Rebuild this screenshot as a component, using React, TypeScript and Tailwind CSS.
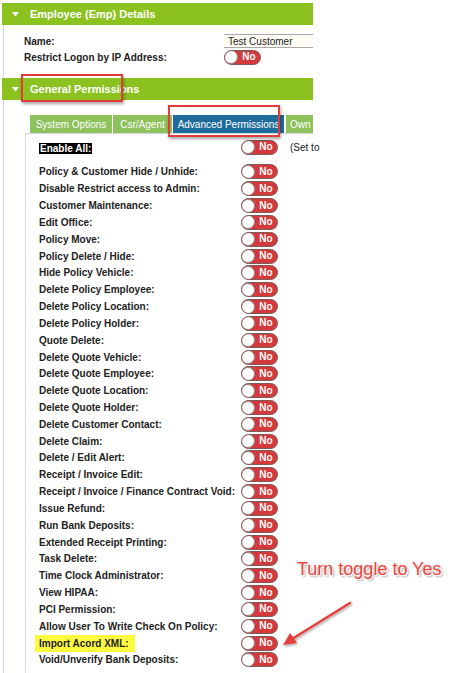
import React from 'react';

const permissions = [
  'Policy & Customer Hide / Unhide:',
  'Disable Restrict access to Admin:',
  'Customer Maintenance:',
  'Edit Office:',
  'Policy Move:',
  'Policy Delete / Hide:',
  'Hide Policy Vehicle:',
  'Delete Policy Employee:',
  'Delete Policy Location:',
  'Delete Policy Holder:',
  'Quote Delete:',
  'Delete Quote Vehicle:',
  'Delete Quote Employee:',
  'Delete Quote Location:',
  'Delete Quote Holder:',
  'Delete Customer Contact:',
  'Delete Claim:',
  'Delete / Edit Alert:',
  'Receipt / Invoice Edit:',
  'Receipt / Invoice / Finance Contract Void:',
  'Issue Refund:',
  'Run Bank Deposits:',
  'Extended Receipt Printing:',
  'Task Delete:',
  'Time Clock Administrator:',
  'View HIPAA:',
  'PCI Permission:',
  'Allow User To Write Check On Policy:',
  'Import Acord XML:',
  'Void/Unverify Bank Deposits:',
];

const Toggle = () => (
  <div className="flex items-center flex-shrink-0 w-[37px] h-[15px] rounded-full bg-[#d43a3c] border border-[#7d5a5a] overflow-hidden">
    <div className="w-[14px] h-[14px] -ml-[1px] rounded-full bg-white border border-[#8a8a8a] flex-shrink-0" />
    <span className="flex-1 text-center text-white font-bold text-[10px] leading-none">No</span>
  </div>
);

const SectionHeader = ({ title }: { title: string }) => (
  <div className="h-[22px] bg-[#8cc21f] flex items-center">
    <svg width="7" height="5" viewBox="0 0 7 5" className="ml-[10px]">
      <path d="M0 0 L7 0 L3.5 4.5 Z" fill="#fff" />
    </svg>
    <span className="ml-[11px] text-white font-bold text-[11px]">{title}</span>
  </div>
);

const App = () => {
  return (
    <div className="relative w-[474px] h-[673px] bg-white overflow-hidden text-[#222]" style={{ fontFamily: '"Liberation Sans", Arial, sans-serif' }}>
      <div className="ml-[2px] w-[311px] pt-[3px]">
        {/* Employee details */}
        <SectionHeader title="Employee (Emp) Details" />
        <div className="border-l border-[#d4d8e0] ml-[1px] pt-[8px] pb-[13px]">
          <div className="flex items-center h-[16px]">
            <div className="w-[220px] flex-shrink-0 pl-[20px] font-bold text-[10px]">Name:</div>
            <div className="flex-1 h-[14px] bg-[#fffdf3] border-y border-[#a8a8a8] flex items-center pl-[4px] text-[10px]">
              Test Customer
            </div>
          </div>
          <div className="flex items-center h-[16px]">
            <div className="w-[220px] flex-shrink-0 pl-[20px] font-bold text-[10px]">Restrict Logon by IP Address:</div>
            <Toggle />
          </div>
        </div>

        {/* General permissions */}
        <SectionHeader title="General Permissions" />
        <div className="border-l border-[#d4d8e0] ml-[1px] pt-[15px]">
          <div className="flex h-[18px] ml-[26px] overflow-hidden text-[10px] text-white whitespace-nowrap">
            <div className="bg-[#8dc15c] flex items-center justify-center flex-shrink-0 w-[82px]">System Options</div>
            <div className="bg-[#8dc15c] flex items-center justify-center flex-shrink-0 w-[59px] ml-[1px]">Csr/Agent</div>
            <div className="bg-[#1f6c9c] flex items-center justify-center flex-shrink-0 w-[111px] ml-[1px]">Advanced Permissions</div>
            <div className="bg-[#8dc15c] flex items-center pl-[4px] flex-shrink-0 w-[28px] ml-[2px] overflow-hidden">Own</div>
          </div>
          <div className="ml-[21px] border-l border-t border-[#d4d8e0] pt-[5px] pb-[20px]">
            <div className="flex items-center h-[16px]">
              <div className="w-[215px] flex-shrink-0 pl-[13px]">
                <span className="bg-black text-white font-bold text-[10px] px-[1px]">Enable All:</span>
              </div>
              <Toggle />
              <span className="ml-[12px] text-[10px] whitespace-nowrap">(Set to</span>
            </div>
            <div className="mt-[8.5px]">
              {permissions.map((p) => (
                <div key={p} className="flex items-center h-[16.83px]">
                  <div className="w-[215px] flex-shrink-0 pl-[13px] font-bold text-[10px] whitespace-nowrap">
                    {p === 'Import Acord XML:' ? (
                      <span className="bg-[#fcfc3e] -ml-[4px] pl-[4px] pr-[6px] py-[3px]">{p}</span>
                    ) : (
                      p
                    )}
                  </div>
                  <Toggle />
                </div>
              ))}
            </div>
          </div>
        </div>
      </div>

      {/* annotation boxes */}
      <div className="absolute left-[21px] top-[74px] w-[102px] h-[28px] border-2 border-[#e23b3b] shadow-[1px_2px_3px_rgba(0,0,0,0.35)]" />
      <div className="absolute left-[168px] top-[105px] w-[112px] h-[32px] border-2 border-[#e23b3b] shadow-[1px_2px_3px_rgba(0,0,0,0.35)]" />

      <div
        className="absolute left-[297px] top-[556px] text-[18px] text-[#e8453c] whitespace-nowrap"
        style={{ textShadow: '1px 1px 0 #fff, 2px 2px 2px rgba(0,0,0,0.35)' }}
      >
        Turn toggle to Yes
      </div>
      <svg className="absolute left-0 top-0" width="474" height="673">
        <defs>
          <filter id="sh" x="-20%" y="-20%" width="140%" height="140%">
            <feDropShadow dx="1" dy="1.5" stdDeviation="1" floodColor="#000" floodOpacity="0.35" />
          </filter>
        </defs>
        <g filter="url(#sh)">
          <line x1="350" y1="603" x2="292" y2="639" stroke="#e3403c" strokeWidth="2.5" strokeLinecap="round" />
          <path d="M283 645 L290 633 L297 643 Z" fill="#e3403c" />
        </g>
      </svg>
    </div>
  );
};

export default App;
